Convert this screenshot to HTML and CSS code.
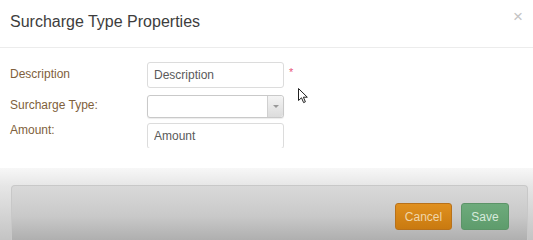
FILE: index.html
```html
<!DOCTYPE html>
<html>
<head>
<meta charset="utf-8">
<link rel="stylesheet" href="styles.css">
</head>
<body>
<div class="modal">
  <div class="header">
    <h1 class="title">Surcharge Type Properties</h1>
    <span class="close">&times;</span>
  </div>
  <div class="body">
    <div class="form">
      <label class="lbl lbl-desc">Description</label>
      <div class="field"><input class="input" placeholder="Description"></div>
      <span class="req">*</span>
      <label class="lbl lbl-type">Surcharge Type:</label>
      <div class="field select"><span class="select-btn"><span class="arrow"></span></span></div>
      <span></span>
      <label class="lbl lbl-amt">Amount:</label>
      <div class="field"><input class="input" placeholder="Amount"></div>
      <span></span>
    </div>
  </div>
  <div class="spacer"></div>
  <div class="footer">
    <div class="panel">
      <button class="btn btn-cancel">Cancel</button>
      <button class="btn btn-save">Save</button>
    </div>
  </div>
  <svg class="cursor" width="12" height="16" viewBox="0 0 12 16"><path d="M0.5 0.5 L0.5 12.5 L3.5 9.8 L5.6 14.6 L7.4 13.8 L5.4 9.2 L9.3 9.2 Z" fill="#fff" stroke="#222" stroke-width="1"/></svg>
</div>
</body>
</html>
```
FILE: styles.css
```css
* { box-sizing: border-box; }
body { margin: 0; background: #fff; font-family: "Liberation Sans", Arial, sans-serif; }
.modal { position: relative; width: 533px; height: 240px; overflow: hidden; display: flex; flex-direction: column; }
.header { height: 48px; border-bottom: 1px solid #ececec; display: flex; align-items: center; justify-content: space-between; padding: 0 10px 4px 10px; }
.title { margin: 0; font-weight: normal; font-size: 16px; color: #3d3d3d; }
.close { color: #c4c4c4; font-size: 17px; line-height: 1; margin-top: -10px; }
.body { height: 100px; overflow: hidden; padding-top: 14px; }
.form { display: grid; grid-template-columns: 147px 137px auto; grid-template-rows: 33px 28px 26px; }
.lbl { font-size: 12px; color: #7f5f3c; padding-left: 10px; }
.lbl-desc { padding-top: 5px; }
.lbl-type { padding-top: 3px; }
.lbl-amt { padding-top: 0; }
.field { height: 26px; }
.input { width: 137px; height: 26px; border: 1px solid #dcdcdc; border-radius: 3px; padding: 0 6px; font-family: inherit; font-size: 12px; color: #555; background: #fff; outline: none; }
.input::placeholder { color: #5a5a5a; }
.select { height: 23px; width: 137px; border: 1px solid #c9c9c9; border-radius: 3px; background: #fff; display: flex; justify-content: flex-end; box-shadow: 0 1px 1px rgba(0,0,0,0.08); }
.select-btn { width: 16px; height: 100%; border-left: 1px solid #d0d0d0; background: linear-gradient(#f4f4f4, #dcdcdc); display: flex; align-items: center; justify-content: center; border-radius: 0 3px 3px 0; }
.arrow { width: 0; height: 0; border-left: 3px solid transparent; border-right: 3px solid transparent; border-top: 3px solid #999; }
.req { color: #e8557a; font-size: 11px; padding: 4px 0 0 5px; }
.spacer { height: 20px; }
.footer { flex: 1; background: linear-gradient(#f7f7f7, #e6e6e6 18px, #c4c4c4 72px); padding: 17px 5px 0 11px; }
.panel { height: 100%; border: 1px solid #c8c8c8; border-bottom: none; border-radius: 4px 4px 0 0; background: linear-gradient(#d9d9d9, #c9c9c9 30px, #aeaeae 55px); display: flex; justify-content: flex-end; align-items: flex-start; padding: 17px 18px 0 0; gap: 9px; }
.btn { height: 27px; font-family: inherit; font-size: 12px; border-radius: 3px; padding: 0; cursor: default; }
.btn-cancel { width: 57px; background: linear-gradient(#e0901f, #c97a10); border: 1px solid #b8711a; color: #f0d6aa; }
.btn-save { width: 48px; background: linear-gradient(#6eab7c, #5e9c6c); border: 1px solid #5c9468; color: #d6eadb; }
.cursor { position: absolute; left: 298px; top: 88px; }
```
